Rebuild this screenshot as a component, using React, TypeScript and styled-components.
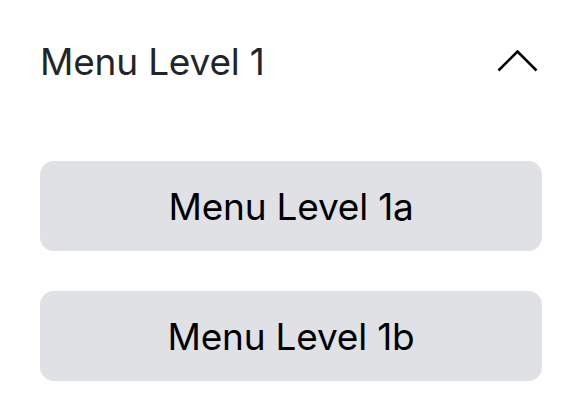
import styled, {createGlobalStyle} from 'styled-components';

const GlobalStyle = createGlobalStyle`
	body {
		margin: 0;
		background: #ffffff;
		font-family: Inter, "Noto Sans", sans-serif;
	}
`;

const Wrap = styled.div`
	width: 502px;
	padding: 0 42px 0 40px;
`;

const Header = styled.div`
	height: 122px;
	display: flex;
	align-items: center;
	justify-content: space-between;
`;

const Title = styled.span`
	font-size: 37px;
	color: #212529;
	letter-spacing: -0.2px;
`;

const Toggle = styled.button`
	border: 0;
	background: none;
	padding: 0;
	margin-right: 4px;
	display: flex;
	cursor: pointer;
`;

const List = styled.div`
	display: flex;
	flex-direction: column;
	gap: 40px;
	padding-top: 39px;
`;

const Item = styled.button`
	height: 90px;
	border: 0;
	border-radius: 14px;
	background: #dfe1e5;
	font-family: inherit;
	font-size: 37px;
	color: #000000;
	letter-spacing: -0.2px;
	cursor: pointer;
`;

const items = ['Menu Level 1a', 'Menu Level 1b'];

const App = () => (
	<>
		<GlobalStyle />
		<Wrap>
			<Header>
				<Title>Menu Level 1</Title>
				<Toggle aria-label="Collapse">
					<svg width="41" height="22" viewBox="0 0 41 22">
						<path d="M1.5 20.5 L20.5 1.5 L39.5 20.5" fill="none" stroke="#000" strokeWidth="2.6" />
					</svg>
				</Toggle>
			</Header>
			<List>
				{items.map(label => (
					<Item key={label}>{label}</Item>
				))}
			</List>
		</Wrap>
	</>
);

export default App;
